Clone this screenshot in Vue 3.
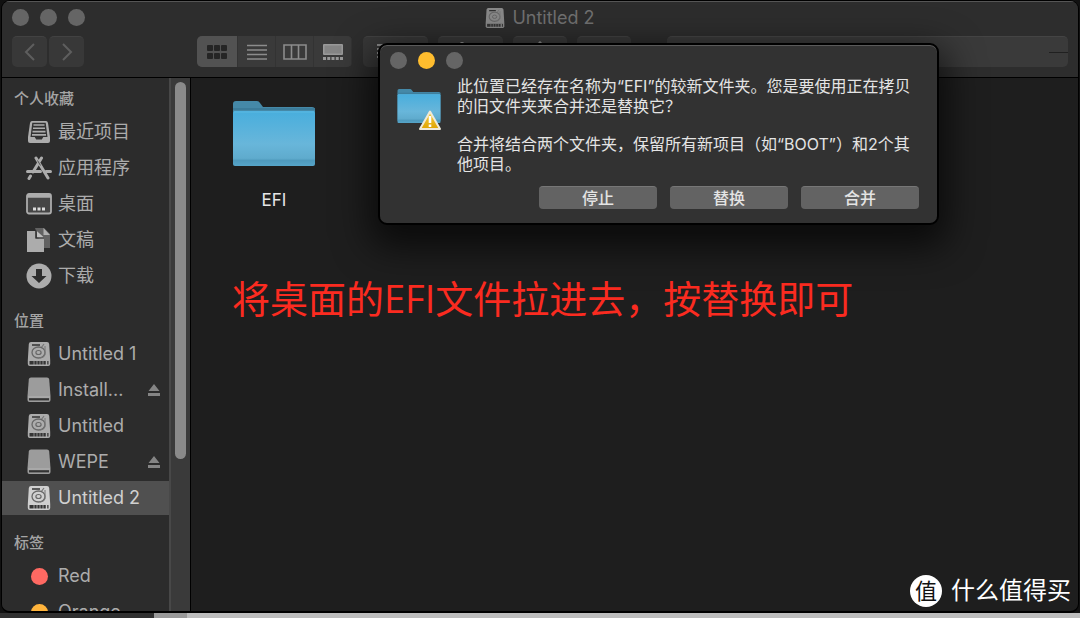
<script setup>
const lights = ['关闭', '最小化', '缩放']
const groups = [
  {
    title: '个人收藏',
    items: [
      { label: '最近项目', icon: 'recent' },
      { label: '应用程序', icon: 'apps' },
      { label: '桌面', icon: 'desktop' },
      { label: '文稿', icon: 'docs' },
      { label: '下载', icon: 'download' },
    ],
  },
  {
    title: '位置',
    items: [
      { label: 'Untitled 1', icon: 'disk' },
      { label: 'Install...', icon: 'volume', eject: true },
      { label: 'Untitled', icon: 'disk' },
      { label: 'WEPE', icon: 'volume', eject: true },
      { label: 'Untitled 2', icon: 'disk', active: true },
    ],
  },
  {
    title: '标签',
    items: [
      { label: 'Red', icon: 'red' },
      { label: 'Orange', icon: 'orange' },
    ],
  },
]
</script>

<template>
  <div class="screen">
    <svg class="defs" aria-hidden="true">
      <defs>
        <linearGradient id="front" x1="0" y1="0" x2="0" y2="1">
          <stop offset="0" stop-color="#48aedd" />
          <stop offset="0.6" stop-color="#68b6da" />
          <stop offset="0.86" stop-color="#5fabcd" />
          <stop offset="0.9" stop-color="#4f9abd" />
          <stop offset="1" stop-color="#56a5c9" />
        </linearGradient>
        <linearGradient id="warn" x1="0" y1="0" x2="0" y2="1">
          <stop offset="0" stop-color="#f5cf45" />
          <stop offset="1" stop-color="#dfa300" />
        </linearGradient>
        <symbol id="folder" viewBox="0 0 84 67">
          <path d="M1 62V4q0-3 3-3h21q2 0 3 2l3 4h49q3 0 3 3v52z" fill="#4589a8" />
          <path d="M1 9h82" stroke="#3c7c9a" stroke-width="2" />
          <rect x="1" y="11" width="82" height="55" rx="2" fill="url(#front)" />
          <path d="M2 12h80" stroke="#5cb9e2" />
        </symbol>
        <symbol id="disk" viewBox="0 0 24 26">
          <path d="M4 1h16q2 0 2.200 2L23.200 19v4q0 2-2 2H2.800q-2 0-2-2v-4L1.800 3Q2 1 4 1z" fill="currentColor" />
          <path d="M5 4h8" stroke="#333" stroke-width="1.500" />
          <path d="M17 3l-3 4" stroke="#777" stroke-width="1.200" />
          <ellipse cx="11.500" cy="11.500" rx="6.500" ry="5.500" fill="none" stroke="#686868" stroke-width="1.300" />
          <ellipse cx="11.500" cy="11.500" rx="2.600" ry="2" fill="none" stroke="#686868" stroke-width="1.200" />
          <path d="M18 5v9q-1 3-5 3" fill="none" stroke="#777" />
          <rect x="2.500" y="20" width="19" height="3.500" fill="#353535" />
          <path d="M7 20v4M10 20v4M13 20v4M16 20v4" stroke="currentColor" stroke-width="0.700" />
          <path d="M19.500 20v4" stroke="currentColor" stroke-width="1.500" />
        </symbol>
      </defs>
    </svg>

    <section class="window">
      <header class="header">
        <div class="titlebar">
          <div class="lights">
            <button v-for="l in lights" :key="l" class="light" :aria-label="l"></button>
          </div>
          <h1 class="title">
            <svg class="title-icon"><use href="#disk" /></svg>
            Untitled 2
          </h1>
        </div>
        <div class="toolbar">
          <div class="nav">
            <button class="tool back" aria-label="后退">
              <svg width="12" height="18" viewBox="0 0 12 18"><path d="M10 1L2 9l8 8" /></svg>
            </button>
            <button class="tool back" aria-label="前进">
              <svg width="12" height="18" viewBox="0 0 12 18"><path d="M2 1l8 8-8 8" /></svg>
            </button>
          </div>
          <div class="views">
            <button class="view on" aria-label="图标显示">
              <svg width="22" height="16" viewBox="0 0 22 16">
                <g fill="#252525">
                  <rect x="1" y="1" width="6" height="6" rx="1" /><rect x="8" y="1" width="6" height="6" rx="1" /><rect x="15" y="1" width="6" height="6" rx="1" />
                  <rect x="1" y="9" width="6" height="6" rx="1" /><rect x="8" y="9" width="6" height="6" rx="1" /><rect x="15" y="9" width="6" height="6" rx="1" />
                </g>
              </svg>
            </button>
            <button class="view" aria-label="列表显示">
              <svg width="20" height="16" viewBox="0 0 20 16"><path d="M0 1.500h20M0 6h20M0 10.500h20M0 15h20" stroke="#8c8c8c" stroke-width="1.500" /></svg>
            </button>
            <button class="view" aria-label="分栏显示">
              <svg width="24" height="16" viewBox="0 0 24 16"><path d="M1 1h22v14H1zM8.500 1v14M15.500 1v14" fill="none" stroke="#8c8c8c" stroke-width="1.600" /></svg>
            </button>
            <button class="view" aria-label="画廊显示">
              <svg width="20" height="16" viewBox="0 0 20 16">
                <rect width="20" height="11" rx="1" fill="#999" />
                <path d="M1.500 1.500h17v8h-17z" fill="#858585" />
                <path d="M0 14.500h20" stroke="#999" stroke-width="3" stroke-dasharray="3 1.250" />
              </svg>
            </button>
          </div>
          <div class="actions">
            <button class="tool wide group" aria-label="排列">
              <svg width="24" height="16" viewBox="0 0 24 16"><path d="M0 1h18M0 5h3M5 5h3M10 5h3M0 9h18M0 13h3M5 13h3M10 13h3" stroke="#8c8c8c" stroke-width="2" /></svg>
            </button>
            <button class="tool wide gear" aria-label="操作">
              <svg width="20" height="20" viewBox="0 0 20 20"><circle cx="10" cy="10" r="5" fill="none" stroke="#8c8c8c" stroke-width="3" /><path d="M10 0v4M10 16v4M0 10h4M16 10h4" stroke="#8c8c8c" stroke-width="3" /></svg>
            </button>
            <button class="tool mid" aria-label="共享">
              <svg width="16" height="22" viewBox="0 0 16 22"><path d="M4 5l4-4 4 4M8 1v12M4 9H1v12h14V9h-3" fill="none" stroke="#8c8c8c" stroke-width="1.500" /></svg>
            </button>
            <button class="tool mid" aria-label="标记"></button>
          </div>
          <div class="search">
            <input type="search" aria-label="搜索" />
            <span class="search-line"></span>
          </div>
        </div>
      </header>

      <div class="body">
        <nav class="sidebar">
          <section v-for="g in groups" :key="g.title" class="section">
            <h2>{{ g.title }}</h2>
            <ul>
              <li v-for="i in g.items" :key="i.label" :class="{ active: i.active }">
                <a href="#">
                  <span class="icon">
                    <svg v-if="i.icon === 'recent'" width="24" height="24" viewBox="0 0 24 24">
                      <path d="M5 1h14q1.500 0 2 2l2 14v4q0 2-2 2H3q-2 0-2-2v-4L3 3q.5-2 2-2z" fill="currentColor" />
                      <path d="M5.300 2.800h13.400L20.500 17h-4.200l-1.500 2.500H9.200L7.700 17H3.500z" fill="#323232" />
                      <path d="M6.500 5h11M6 8.300h12M5.500 11.600h13M5 14.900h14" stroke="currentColor" stroke-width="1.600" />
                    </svg>
                    <svg v-else-if="i.icon === 'apps'" width="26" height="24" viewBox="0 0 26 24">
                      <path d="M10 2l3 5 9 15M15.500 2L7 16M4.500 20L3 22.500" fill="none" stroke="currentColor" stroke-width="3" stroke-linecap="round" />
                      <path d="M1.500 15.500h13M20 15.500h4.500" stroke="currentColor" stroke-width="3" stroke-linecap="round" />
                      <path d="M11.500 4.500l3 5" stroke="#555" stroke-width="1" />
                    </svg>
                    <svg v-else-if="i.icon === 'desktop'" width="26" height="22" viewBox="0 0 26 22">
                      <rect x="1" y="1" width="24" height="19.500" rx="2" fill="#464646" stroke="currentColor" stroke-width="1.800" />
                      <path d="M1 3h24" stroke="currentColor" stroke-width="3.500" />
                      <path d="M7 16h3M11.500 16h3M16 16h3" stroke="#ddd" stroke-width="3" />
                    </svg>
                    <svg v-else-if="i.icon === 'docs'" width="24" height="24" viewBox="0 0 24 24">
                      <path d="M8 0h9l6 6v14h-8z" fill="#626262" />
                      <path d="M16.500 0L23 7h-6.500z" fill="#b0b0b0" />
                      <path d="M0 3h8.500v7.500H17V24H0z" fill="currentColor" />
                      <path d="M9.800 3L17 9.500H9.800z" fill="#c0c0c0" />
                      <path d="M9 2.500V10h8" fill="none" stroke="#333" stroke-width="1.200" />
                    </svg>
                    <svg v-else-if="i.icon === 'download'" width="26" height="26" viewBox="0 0 26 26">
                      <circle cx="13" cy="13" r="12.500" fill="currentColor" />
                      <path d="M10 6h6v7h4.500L13 20l-7.500-7H10z" fill="#2c2c2c" />
                    </svg>
                    <svg v-else-if="i.icon === 'disk'" width="24" height="26"><use href="#disk" /></svg>
                    <svg v-else-if="i.icon === 'volume'" width="24" height="26" viewBox="0 0 24 26">
                      <path d="M4 0.500h16q2 0 2.200 2L23.500 19v4q0 2-2 2h-19q-2 0-2-2v-4L1.800 2.500q.2-2 2.200-2z" fill="#9c9c9c" />
                      <path d="M2 22.300h20" stroke="#333" stroke-width="2.200" />
                      <path d="M1 20h22" stroke="#b4b4b4" stroke-width="1" />
                    </svg>
                    <span v-else class="tag" :class="i.icon"></span>
                  </span>
                  <span class="label">{{ i.label }}</span>
                </a>
                <button v-if="i.eject" class="eject" aria-label="推出">
                  <svg width="12" height="12" viewBox="0 0 12 12"><path d="M6 0l5.500 7H.5zM0 9h12v3H0z" fill="currentColor" /></svg>
                </button>
              </li>
            </ul>
          </section>
        </nav>
        <div class="scrollbar"><div class="thumb"></div></div>
        <main class="content">
          <figure class="file">
            <svg class="file-icon"><use href="#folder" /></svg>
            <figcaption>EFI</figcaption>
          </figure>
          <p class="note">将桌面的EFI文件拉进去，按替换即可</p>
        </main>
      </div>
    </section>

    <footer class="strip"><span></span><span></span><span></span></footer>

    <div class="dialog" role="dialog" aria-labelledby="question">
      <div class="lights">
        <button v-for="(l, n) in lights" :key="l" class="light" :class="{ yellow: n === 1 }" :aria-label="l"></button>
      </div>
      <div class="message">
        <svg class="alert-icon" width="46" height="46" viewBox="0 0 46 46">
          <use href="#folder" x="0" y="1" width="44" height="36" />
          <path d="M33 24.500L43 42H23z" fill="url(#warn)" stroke="#efe9d8" stroke-width="2" stroke-linejoin="round" />
          <path d="M33 29v7M33 37.500v2.500" stroke="#fff" stroke-width="2.600" />
        </svg>
        <div class="text">
          <p id="question">此位置已经存在名称为“EFI”的较新文件夹。您是要使用正在拷贝<br />的旧文件夹来合并还是替换它？</p>
          <p>合并将结合两个文件夹，保留所有新项目（如“BOOT”）和2个其<br />他项目。</p>
        </div>
      </div>
      <div class="buttons">
        <button>停止</button>
        <button>替换</button>
        <button>合并</button>
      </div>
    </div>

    <div class="brand">
      <span class="badge">值</span>
      <span>什么值得买</span>
    </div>
  </div>
</template>

<style>
body {
  background: #111;
}
</style>

<style scoped>
* {
  box-sizing: border-box;
  margin: 0;
  padding: 0;
}
button,
input {
  border: 0;
  font: inherit;
  color: inherit;
}
.screen {
  position: relative;
  display: flex;
  flex-direction: column;
  height: 100vh;
  overflow: hidden;
  font-family: Inter, "Noto Sans CJK SC", sans-serif;
  color: #acacac;
}
.defs {
  position: absolute;
  width: 0;
  height: 0;
}
.window {
  flex: 1;
  min-height: 0;
  display: flex;
  flex-direction: column;
  margin: 0 1px;
  border: 1px solid #000;
  border-bottom-width: 2px;
  border-radius: 9px;
  overflow: hidden;
  background: #1e1e1e;
}
.header {
  height: 77px;
  flex: none;
  background: #2d2d2d;
  border-top: 1px solid #555;
  border-bottom: 1px solid #000;
}
.titlebar {
  position: relative;
  display: flex;
  align-items: center;
  justify-content: center;
  height: 31px;
}
.lights {
  display: flex;
  gap: 11px;
}
.light {
  width: 17px;
  height: 17px;
  border-radius: 50%;
  background: #656565;
}
.light.yellow {
  background: #ffbd2e;
}
.titlebar .lights {
  position: absolute;
  left: 10px;
  top: 7px;
}
.title {
  display: flex;
  align-items: center;
  gap: 7px;
  font-size: 18px;
  font-weight: 400;
  color: #707070;
}
.title-icon {
  width: 20px;
  height: 22px;
  color: #888;
}
.toolbar {
  display: flex;
  align-items: center;
  padding: 3px 10px 0;
}
.nav {
  display: flex;
  gap: 2px;
  margin-right: 113px;
}
.tool {
  display: flex;
  align-items: center;
  justify-content: center;
  height: 31px;
  border-radius: 5px;
  background: #383838;
  border-top: 1px solid #424242;
}
.back {
  width: 35px;
}
.back path {
  fill: none;
  stroke: #5e5e5e;
  stroke-width: 2;
}
.views {
  display: flex;
  height: 31px;
  border-radius: 5px;
  overflow: hidden;
  background: #3a3a3a;
  margin-right: 11px;
}
.view {
  width: 38px;
  display: flex;
  align-items: center;
  justify-content: center;
  background: #3a3a3a;
  border-right: 1px solid #333;
}
.view.on {
  width: 41px;
  background: #525252;
}
.actions {
  display: flex;
  gap: 10px;
  margin-right: 36px;
}
.wide {
  width: 65px;
}
.group {
  justify-content: flex-start;
  padding-left: 14px;
}
.gear {
  justify-content: flex-start;
  padding-left: 14px;
}
.mid {
  width: 54px;
}
.search {
  position: relative;
  flex: 1;
  height: 31px;
}
.search input {
  width: 100%;
  height: 100%;
  border-radius: 5px;
  background: #3a3a3a;
  border-top: 1px solid #444;
}
.search-line {
  position: absolute;
  right: 0;
  top: 16px;
  width: 19px;
  height: 1px;
  background: #202020;
}
.body {
  flex: 1;
  min-height: 0;
  display: flex;
}
.sidebar {
  flex: none;
  width: 167px;
  padding-top: 5px;
  background: #2c2c2c;
  overflow: hidden;
}
.section {
  margin-bottom: 12px;
}
.section h2 {
  height: 32px;
  line-height: 32px;
  padding-left: 12px;
  font-size: 15px;
  font-weight: 500;
  color: #a5a5a5;
}
.section ul {
  display: grid;
  gap: 2px;
  list-style: none;
}
.section li {
  display: flex;
  align-items: center;
  height: 34px;
  padding: 0 9px 0 24px;
}
.section li.active {
  background: #505050;
  color: #d0d0d0;
}
.section a {
  flex: 1;
  display: flex;
  align-items: center;
  gap: 6px;
  color: inherit;
  text-decoration: none;
  font-size: 18px;
  line-height: 34px;
  white-space: nowrap;
}
.icon {
  width: 26px;
  display: flex;
  justify-content: center;
}
.tag {
  width: 17px;
  height: 17px;
  border-radius: 50%;
}
.tag.red {
  background: #ff6962;
}
.tag.orange {
  background: #ffb43c;
}
.eject {
  display: flex;
  background: none;
  color: #858585;
}
.scrollbar {
  flex: none;
  width: 22px;
  padding: 4px 4px 0 4px;
  border-left: 2px solid #484848;
  border-right: 1px solid #000;
  background: #3a3a3a;
}
.thumb {
  width: 11px;
  height: 377px;
  border-radius: 6px;
  background: #8a8a8a;
}
.content {
  flex: 1;
  padding: 22px 41px;
}
.file {
  width: 84px;
  display: flex;
  flex-direction: column;
  align-items: center;
  gap: 21px;
  color: #e6e6e6;
  font-size: 17px;
  line-height: 24px;
}
.file-icon {
  width: 84px;
  height: 67px;
}
.note {
  margin-top: 58px;
  font: 38px/56px "Open Sans", "Noto Sans CJK SC", sans-serif;
  font-weight: 400;
  color: #fb2b20;
  white-space: nowrap;
}
.strip {
  flex: none;
  display: flex;
  height: 5px;
  background: #bdbdbd;
}
.strip span:nth-child(1) {
  width: 154px;
  background: #303030;
}
.strip span:nth-child(2) {
  width: 33px;
  background: #9a9a9a;
}
.dialog {
  position: absolute;
  left: 378px;
  top: 43px;
  width: 561px;
  padding: 7px 18px 14px 10px;
  border: 2px solid #000;
  border-radius: 9px;
  background: #323232;
  box-shadow: inset 0 1px 0 #5a5a5a, 0 14px 36px 8px rgba(0, 0, 0, 0.65);
  color: #e4e4e4;
}
.message {
  display: flex;
  gap: 14px;
  margin-top: 7px;
  padding-left: 7px;
}
.alert-icon {
  flex: none;
  margin-top: 11px;
}
.text {
  font-size: 16px;
  line-height: 20px;
  white-space: nowrap;
}
.text p + p {
  margin-top: 18px;
}
.buttons {
  display: flex;
  justify-content: flex-end;
  gap: 13px;
  margin-top: 12px;
}
.buttons button {
  width: 118px;
  height: 23px;
  border-radius: 4px;
  background: #636363;
  border-top: 1px solid #777;
  font-size: 16px;
  font-weight: 500;
  line-height: 22px;
}
.brand {
  position: absolute;
  right: 9px;
  bottom: 11px;
  display: flex;
  align-items: center;
  gap: 9px;
  font-size: 24px;
  line-height: 32px;
  color: #fff;
}
.badge {
  width: 32px;
  height: 32px;
  border-radius: 50%;
  background: #fff;
  color: #111;
  font-size: 22px;
  text-align: center;
}
</style>
